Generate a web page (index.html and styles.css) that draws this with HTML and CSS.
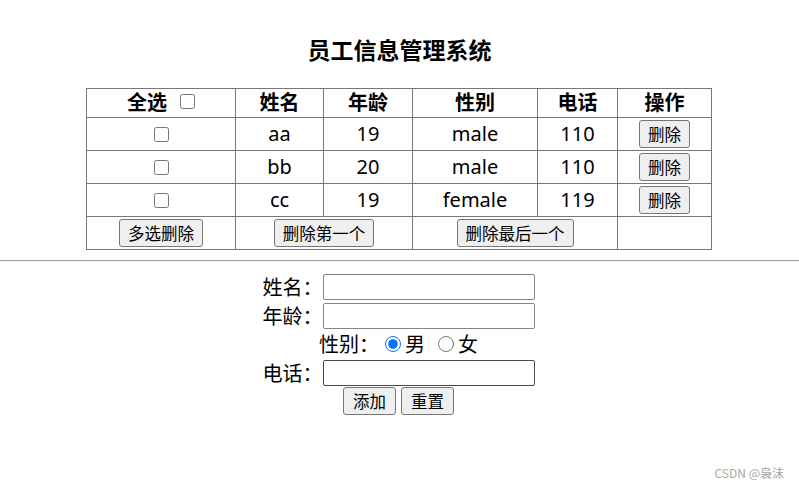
FILE: index.html
```html
<!DOCTYPE html>
<html lang="zh">
<head>
<meta charset="utf-8">
<title>员工信息管理系统</title>
<link rel="stylesheet" href="styles.css">
</head>
<body>
<h3 class="title">员工信息管理系统</h3>
<table class="staff">
  <colgroup>
    <col class="c1"><col class="c2"><col class="c3"><col class="c4"><col class="c5"><col class="c6">
  </colgroup>
  <thead>
    <tr>
      <th>全选<input type="checkbox" class="chk chk-all"></th>
      <th>姓名</th>
      <th>年龄</th>
      <th>性别</th>
      <th>电话</th>
      <th>操作</th>
    </tr>
  </thead>
  <tbody>
    <tr>
      <td><input type="checkbox" class="chk"></td>
      <td>aa</td><td>19</td><td>male</td><td>110</td>
      <td><button class="btn">删除</button></td>
    </tr>
    <tr>
      <td><input type="checkbox" class="chk"></td>
      <td>bb</td><td>20</td><td>male</td><td>110</td>
      <td><button class="btn">删除</button></td>
    </tr>
    <tr>
      <td><input type="checkbox" class="chk"></td>
      <td>cc</td><td>19</td><td>female</td><td>119</td>
      <td><button class="btn">删除</button></td>
    </tr>
    <tr>
      <td><button class="btn">多选删除</button></td>
      <td colspan="2"><button class="btn">删除第一个</button></td>
      <td colspan="2"><button class="btn">删除最后一个</button></td>
      <td></td>
    </tr>
  </tbody>
</table>
<hr class="rule">
<form class="form">
  <div class="row"><span class="label">姓名：</span><input type="text" class="field"></div>
  <div class="row"><span class="label">年龄：</span><input type="text" class="field"></div>
  <div class="row">
    <span class="label">性别：</span>
    <input type="radio" name="sex" class="radio" checked><span class="opt">男</span>
    <input type="radio" name="sex" class="radio radio-second"><span class="opt">女</span>
  </div>
  <div class="row"><span class="label">电话：</span><input type="text" class="field field-hover"></div>
  <div class="row row-btns"><button type="button" class="btn btn-form">添加</button><button type="button" class="btn btn-form">重置</button></div>
</form>
<div class="watermark">CSDN @袅沫</div>
</body>
</html>
```
FILE: styles.css
```css
html, body {
  margin: 0;
  padding: 0;
  background: #fff;
}
body {
  font-family: "Noto Sans", "Noto Sans CJK SC", sans-serif;
  font-size: 20px;
  color: #000;
  position: relative;
  width: 799px;
  height: 490px;
  overflow: hidden;
}
.title {
  margin: 35px 0 0;
  font-size: 23px;
  line-height: 30px;
  font-weight: 700;
  text-align: center;
}
.staff {
  border-collapse: collapse;
  table-layout: fixed;
  width: 625px;
  margin: 23px 0 0 86px;
}
.c1 { width: 149px; }
.c2 { width: 88px; }
.c3 { width: 89px; }
.c4 { width: 125px; }
.c5 { width: 80px; }
.c6 { width: 94px; }
.staff th, .staff td {
  border: 1px solid #777;
  text-align: center;
  vertical-align: middle;
  padding: 0;
  line-height: 24px;
}
.staff th {
  height: 28px;
  font-weight: 700;
}
.staff td {
  height: 32px;
}
.chk {
  width: 15px;
  height: 15px;
  margin: 0 0 0 1px;
  vertical-align: -1px;
}
.chk-all {
  margin-left: 13px;
  vertical-align: 1px;
}
.btn {
  font-family: "Noto Sans CJK SC", sans-serif;
  font-size: 16.5px;
  line-height: 24px;
  height: 28px;
  padding: 0 8px;
  margin: 0;
  background: #efefef;
  border: 1px solid #767676;
  border-radius: 3px;
  color: #000;
  vertical-align: middle;
}
.rule {
  margin: 10px 0 0;
  height: 0;
  border: 0;
  border-top: 1px solid #a0a0a0;
  border-bottom: 1px solid #eeeeee;
}
.form {
  margin: 11px 0 0;
}
.row {
  display: flex;
  justify-content: center;
  align-items: center;
  height: 28.5px;
  padding-right: 2px;
}
.label {
  width: 60px;
  line-height: 28px;
  font-family: "Noto Sans CJK SC", sans-serif;
}
.opt {
  font-family: "Noto Sans CJK SC", sans-serif;
  line-height: 28px;
}
.field {
  box-sizing: border-box;
  width: 212px;
  height: 26px;
  margin: 0;
  padding: 1px 2px;
  border: 1px solid #858585;
  border-radius: 2px;
  font-size: 16px;
  background: #fff;
}
.field-hover {
  border-color: #4a4a4a;
}
.radio {
  width: 16px;
  height: 16px;
  margin: 0 4px 0 6px;
}
.radio-second {
  margin-left: 13px;
}
.row-btns {
  gap: 5px;
}
.btn-form {
  padding: 0 9px;
}
.watermark {
  position: absolute;
  right: 15px;
  bottom: 9px;
  font-family: "Noto Sans CJK SC", sans-serif;
  font-size: 12px;
  line-height: 16px;
  color: #a6a6a6;
}
```
